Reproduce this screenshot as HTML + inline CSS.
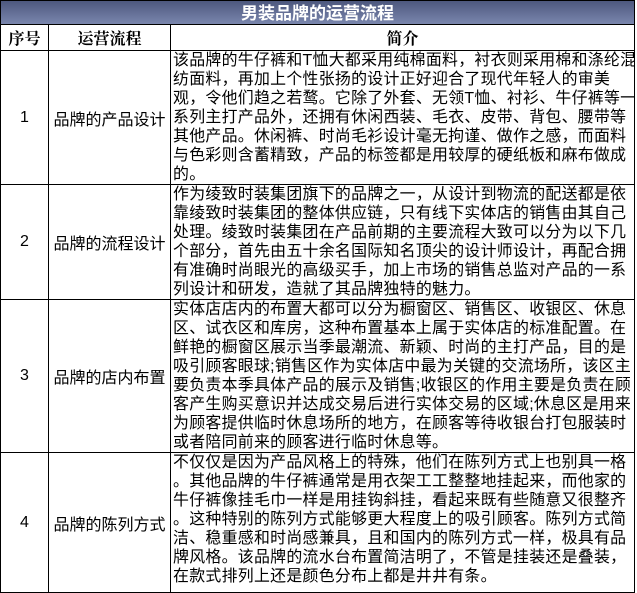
<!DOCTYPE html>
<html><head><meta charset="utf-8"><style>
body{margin:0;width:637px;height:585px;overflow:hidden;background:#fff;font-family:"Liberation Sans","Noto Sans CJK SC",sans-serif;color:#000}
.title{position:absolute;left:0;top:0;width:635px;height:25px;background:linear-gradient(#4d587e,#7a86ad);color:#fff;font-size:17px;font-weight:bold;text-align:center;line-height:25px;border:1px solid #000;box-sizing:border-box}
table{position:absolute;left:0;top:24px;border-collapse:collapse;table-layout:fixed;width:635px}
td{border:1px solid #000;padding:0;font-size:16px;vertical-align:middle;text-align:center;overflow:hidden}
th{border:1px solid #000;height:25px;padding:0;font-size:16px;font-family:"Liberation Sans","Noto Serif CJK SC",serif;font-weight:bold}
td.t{text-align:left;white-space:nowrap;line-height:19px;padding-left:2px;vertical-align:top;font-size:15.9px;letter-spacing:0.3px}
</style></head><body>
<div class="title">男装品牌的运营流程</div>
<table>
<colgroup><col style="width:48px"><col style="width:122px"><col></colgroup>
<tr><th>序号</th><th>运营流程</th><th>简介</th></tr>
<tr style="height:132px"><td>1</td><td>品牌的产品设计</td><td class="t">该品牌的牛仔裤和T恤大都采用纯棉面料，衬衣则采用棉和涤纶混<br>纺面料，再加上个性张扬的设计正好迎合了现代年轻人的审美<br>观，令他们趋之若鹜。它除了外套、无领T恤、衬衫、牛仔裤等一<br>系列主打产品外，还拥有休闲西装、毛衣、皮带、背包、腰带等<br>其他产品。休闲裤、时尚毛衫设计毫无拘谨、做作之感，而面料<br>与色彩则含蓄精致，产品的标签都是用较厚的硬纸板和麻布做成<br>的。</td></tr>
<tr style="height:112px"><td>2</td><td>品牌的流程设计</td><td class="t">作为绫致时装集团旗下的品牌之一，从设计到物流的配送都是依<br>靠绫致时装集团的整体供应链，只有线下实体店的销售由其自己<br>处理。绫致时装集团在产品前期的主要流程大致可以分为以下几<br>个部分，首先由五十余名国际知名顶尖的设计师设计，再配合拥<br>有准确时尚眼光的高级买手，加上市场的销售总监对产品的一系<br>列设计和研发，造就了其品牌独特的魅力。</td></tr>
<tr style="height:151px"><td>3</td><td>品牌的店内布置</td><td class="t">实体店店内的布置大都可以分为橱窗区、销售区、收银区、休息<br>区、试衣区和库房，这种布置基本上属于实体店的标准配置。在<br>鲜艳的橱窗区展示当季最潮流、新颖、时尚的主打产品，目的是<br>吸引顾客眼球;销售区作为实体店中最为关键的交流场所，该区主<br>要负责本季具体产品的展示及销售;收银区的作用主要是负责在顾<br>客产生购买意识并达成交易后进行实体交易的区域;休息区是用来<br>为顾客提供临时休息场所的地方，在顾客等待收银台打包服装时<br>或者陪同前来的顾客进行临时休息等。</td></tr>
<tr style="height:140px"><td>4</td><td>品牌的陈列方式</td><td class="t">不仅仅是因为产品风格上的特殊，他们在陈列方式上也别具一格<br>。其他品牌的牛仔裤通常是用衣架工工整整地挂起来，而他家的<br>牛仔裤像挂毛巾一样是用挂钩斜挂，看起来既有些随意又很整齐<br>。这种特别的陈列方式能够更大程度上的吸引顾客。陈列方式简<br>洁、稳重感和时尚感兼具，且和国内的陈列方式一样，极具有品<br>牌风格。该品牌的流水台布置简洁明了，不管是挂装还是叠装，<br>在款式排列上还是颜色分布上都是井井有条。</td></tr>
</table>
</body></html>
